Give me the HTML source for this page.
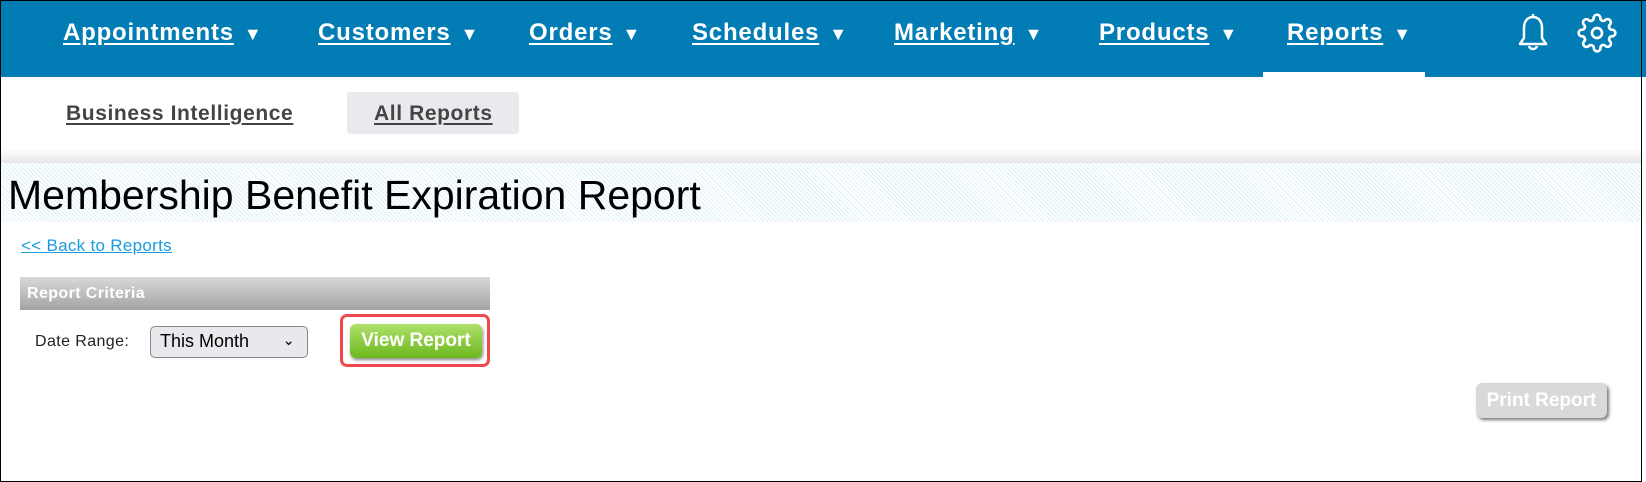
<!DOCTYPE html>
<html><head><meta charset="utf-8"><style>
*{margin:0;padding:0;box-sizing:border-box}
body{width:1646px;height:482px;overflow:hidden;background:#fff;font-family:"Liberation Sans",sans-serif;position:relative}
.frame{position:absolute;left:0;top:0;width:1642px;height:482px;border:1px solid #000;border-top:none}
.nav{position:absolute;left:0;top:0;width:1646px;height:77px;background:#017cb5;border-top:1px solid #000}
.nav a{position:absolute;top:18px;color:#fff;font-size:24px;font-weight:bold;text-decoration:underline;text-underline-offset:3px;white-space:nowrap;letter-spacing:0.8px}
.nav a span{text-decoration:none;display:inline-block;margin-left:10px;font-size:18px}
.active{position:absolute;left:1263px;top:71px;width:162px;height:6px;background:#fff}
.sub{position:absolute;top:102px;font-size:21px;font-weight:bold;color:#444;text-decoration:underline;text-underline-offset:3px;letter-spacing:0.6px}
.allr{position:absolute;left:347px;top:92px;width:172px;height:42px;background:#e8eaed;border-radius:3px}
.shadow{position:absolute;left:1px;top:149px;width:1640px;height:14px;background:linear-gradient(#fff,#e6e6e6)}
.stripe{position:absolute;left:1px;top:163px;width:1640px;height:59px;background:repeating-linear-gradient(45deg,#fff 0 2px,#dcf0f7 2px 3px)}
h1{position:absolute;left:8px;top:172px;font-weight:normal;font-size:41px;color:#000}
.back{position:absolute;left:21px;top:236px;font-size:17px;color:#1a9be0;text-decoration:underline;letter-spacing:0.3px}
.hdr{position:absolute;left:20px;top:277px;width:470px;height:33px;background:linear-gradient(#d9d9d9,#a3a3a3);color:#fff;font-weight:bold;font-size:16px;padding:8px 7px;letter-spacing:0.4px}
.lbl{position:absolute;left:35px;top:333px;font-size:16px;color:#222;letter-spacing:0.4px}
.sel{position:absolute;left:150px;top:326px;width:158px;height:32px;border:1px solid #888;border-radius:5px;background:#e9e9ed;font-size:18px;padding:4px 9px;color:#000}
.sel i{position:absolute;right:12px;top:4px;font-style:normal;font-size:15px}
.ring{position:absolute;left:340px;top:314px;width:150px;height:53px;border:3px solid #f0474c;border-radius:7px}
.vr{position:absolute;left:350px;top:324px;width:132px;height:34px;border-radius:6px;background:linear-gradient(#aee06a,#6db81e);color:#fff;font-weight:bold;font-size:19px;text-align:center;line-height:34px;box-shadow:1px 2px 3px #888}
.pr{position:absolute;left:1476px;top:383px;width:131px;height:35px;border-radius:6px;background:#d9d9d9;color:#fff;font-weight:bold;font-size:19px;text-align:center;line-height:35px;box-shadow:2px 2px 3px #777}
</style></head><body>
<div class="nav">
<a style="left:63px">Appointments<span>▼</span></a>
<a style="left:318px">Customers<span>▼</span></a>
<a style="left:529px">Orders<span>▼</span></a>
<a style="left:692px">Schedules<span>▼</span></a>
<a style="left:894px">Marketing<span>▼</span></a>
<a style="left:1099px">Products<span>▼</span></a>
<a style="left:1287px">Reports<span>▼</span></a>
<svg style="position:absolute;left:1515px;top:10px" width="36" height="42" viewBox="0 0 36 42" fill="none" stroke="#fff" stroke-width="2.5" stroke-linejoin="round"><path d="M18 3v3M18 6c-6 0-9 5-9 11v10l-4 6h26l-4-6V17c0-6-3-11-9-11zM14 35c1 4 7 4 8 0"/></svg>
<svg style="position:absolute;left:1577px;top:12px" width="40" height="40" viewBox="0 0 24 24" fill="none" stroke="#fff" stroke-width="1.6"><circle cx="12" cy="12" r="3"/><path d="M19.4 15a1.65 1.65 0 0 0 .33 1.82l.06.06a2 2 0 1 1-2.830 2.83l-.06-.06a1.65 1.65 0 0 0-1.82-.33 1.65 1.65 0 0 0-1 1.51V21a2 2 0 1 1-4 0v-.09A1.65 1.65 0 0 0 9 19.4a1.65 1.65 0 0 0-1.82.33l-.06.06a2 2 0 1 1-2.83-2.83l.06-.06A1.65 1.65 0 0 0 4.6 15a1.65 1.65 0 0 0-1.51-1H3a2 2 0 1 1 0-4h.09A1.65 1.65 0 0 0 4.6 9a1.65 1.65 0 0 0-.33-1.82l-.06-.06a2 2 0 1 1 2.83-2.83l.06.06A1.65 1.65 0 0 0 9 4.6a1.65 1.65 0 0 0 1-1.51V3a2 2 0 1 1 4 0v.09a1.65 1.65 0 0 0 1 1.51 1.65 1.65 0 0 0 1.82-.33l.06-.06a2 2 0 1 1 2.83 2.83l-.06.06A1.65 1.65 0 0 0 19.4 9a1.65 1.65 0 0 0 1.51 1H21a2 2 0 1 1 0 4h-.09a1.65 1.65 0 0 0-1.51 1z"/></svg>
<div class="active"></div>
</div>
<div class="allr"></div>
<div class="sub" style="left:66px">Business Intelligence</div>
<div class="sub" style="left:374px">All Reports</div>
<div class="shadow"></div>
<div class="stripe"></div>
<h1>Membership Benefit Expiration Report</h1>
<a class="back">&lt;&lt; Back to Reports</a>
<div class="hdr">Report Criteria</div>
<div class="lbl">Date Range:</div>
<div class="sel">This Month<i>⌄</i></div>
<div class="ring"></div>
<div class="vr">View Report</div>
<div class="pr">Print Report</div>
<div class="frame"></div>
</body></html>
